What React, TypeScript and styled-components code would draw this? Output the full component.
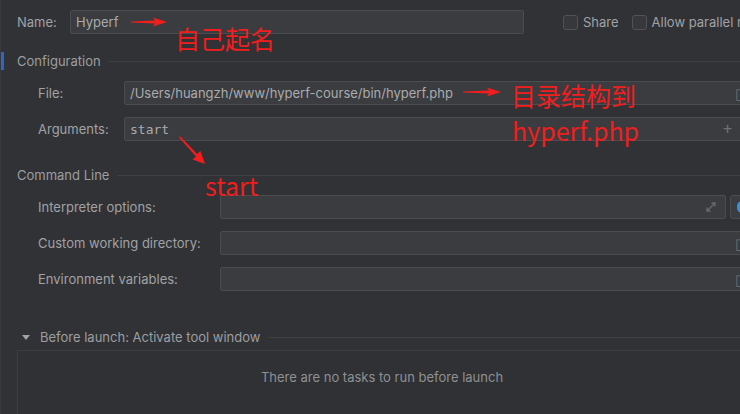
import React from "react";
import styled, { createGlobalStyle } from "styled-components";

const Global = createGlobalStyle`
  html, body { margin: 0; padding: 0; background: #313235; }
  body { width: 740px; height: 414px; overflow: hidden; font-family: Inter, "Liberation Sans", Arial, sans-serif; }
`;

const Root = styled.div`
  position: relative;
  width: 740px;
  height: 414px;
  overflow: hidden;
  background: #313235;
  border-left: 1px solid #38393c;
  box-sizing: border-box;
  color: #a3a5a8;
  font-size: 13px;
`;

const Accent = styled.div`
  position: absolute;
  left: 0;
  top: 52px;
  width: 3px;
  height: 18px;
  background: #2f64c8;
`;

const Content = styled.div`
  display: flex;
  flex-direction: column;
  padding-left: 16px;
  width: 760px;
  box-sizing: border-box;
`;

const TopRow = styled.div`
  display: flex;
  align-items: center;
  padding-top: 10px;
  height: 24px;
`;

const NameLabel = styled.span`
  width: 53px;
  color: #a0a2a5;
`;

const Input = styled.div<{ $w?: number; $mono?: boolean }>`
  box-sizing: border-box;
  height: 24px;
  ${(p) => (p.$w ? `width: ${p.$w}px; flex: none;` : "flex: 1;")}
  background: #3a3c3f;
  border: 1px solid #4a4c4f;
  border-radius: 2px;
  display: flex;
  align-items: center;
  padding: 0 5px;
  color: #a9abae;
  font-size: 13px;
  font-family: ${(p) => (p.$mono ? '"DejaVu Sans Mono", monospace' : 'Inter, "Liberation Sans", Arial, sans-serif')};
  position: relative;
  white-space: nowrap;
`;

const Check = styled.label<{ $ml: number }>`
  display: flex;
  align-items: center;
  gap: 5px;
  margin-left: ${(p) => p.$ml}px;
  color: #a0a2a5;
  white-space: nowrap;
  &::before {
    content: "";
    width: 13px;
    height: 13px;
    border: 1px solid #505255;
    border-radius: 3px;
    background: #36383b;
  }
`;

const SectionHeader = styled.div<{ $mt: number; $indent?: number }>`
  display: flex;
  align-items: center;
  gap: 8px;
  height: 16px;
  margin-top: ${(p) => p.$mt}px;
  padding-left: ${(p) => p.$indent ?? 0}px;
  color: #9c9ea1;
  white-space: nowrap;
  &::after {
    content: "";
    flex: 1;
    height: 1px;
    background: #3d3f42;
  }
`;

const Row = styled.div<{ $mt: number }>`
  display: flex;
  align-items: center;
  margin-top: ${(p) => p.$mt}px;
  padding-left: 21px;
`;

const Label = styled.span<{ $w: number }>`
  width: ${(p) => p.$w}px;
  flex: none;
  color: #a0a2a5;
  white-space: nowrap;
`;

const FieldIcon = styled.span<{ $r: number }>`
  position: absolute;
  right: ${(p) => p.$r}px;
  top: 50%;
  transform: translateY(-50%);
  color: #6f7174;
  font-size: 15px;
  line-height: 1;
  display: flex;
`;

const SideButton = styled.div`
  width: 24px;
  height: 24px;
  margin-left: 4px;
  box-sizing: border-box;
  border: 1px solid #4a4c4f;
  border-radius: 3px;
  background: #3a3c3f;
  display: flex;
  align-items: center;
  padding-left: 6px;
  flex: none;
`;

const BlueDot = styled.span`
  width: 10px;
  height: 12px;
  border-radius: 5px;
  background: #3a8fd6;
`;

const Triangle = styled.span`
  width: 0;
  height: 0;
  border-left: 4px solid transparent;
  border-right: 4px solid transparent;
  border-top: 5px solid #a0a2a5;
  margin-right: 2px;
`;

const TaskBox = styled.div`
  margin-top: 5px;
  height: 80px;
  border-left: 1px solid #3b3d40;
  border-top: 1px solid #3b3d40;
  background: #303134;
  display: flex;
  justify-content: center;
  padding-top: 18px;
  padding-right: 15px;
  box-sizing: border-box;
  color: #8e9093;
  font-size: 13px;
`;

const Note = styled.div<{ $x: number; $y: number }>`
  position: absolute;
  left: ${(p) => p.$x}px;
  top: ${(p) => p.$y}px;
  color: #f21d1d;
  font-family: "Noto Sans CJK SC", "Noto Sans", sans-serif;
  font-size: 25px;
  line-height: 30px;
  white-space: nowrap;
`;

const ArrowSvg = styled.svg<{ $x: number; $y: number }>`
  position: absolute;
  left: ${(p) => p.$x}px;
  top: ${(p) => p.$y}px;
  overflow: visible;
`;

const HArrow = ({ x, y, len }: { x: number; y: number; len: number }) => (
  <ArrowSvg $x={x} $y={y} width={len} height={10}>
    <polygon
      points={`0,4.5 ${len - 12},3.4 ${len - 14},0.5 ${len},5 ${len - 14},9.5 ${len - 12},6.6 0,5.5`}
      fill="#f21d1d"
    />
  </ArrowSvg>
);

const DiagArrow = () => (
  <ArrowSvg $x={176} $y={136} width={32} height={32}>
    <polygon points="2,1.5 3.5,0.5 20,18 23.5,15 28,28 15.5,23.5 19,20.5" fill="#f21d1d" />
  </ArrowSvg>
);

export default function App() {
  return (
    <>
      <Global />
      <Root>
        <Accent />
        <Content>
          <TopRow>
            <NameLabel>Name:</NameLabel>
            <Input $w={454}>Hyperf</Input>
            <Check $ml={39}>Share</Check>
            <Check $ml={13}>Allow parallel run</Check>
          </TopRow>

          <SectionHeader $mt={19}>Configuration</SectionHeader>
          <Row $mt={12}>
            <Label $w={86}>File:</Label>
            <Input>
              /Users/huangzh/www/hyperf-course/bin/hyperf.php
              <FieldIcon $r={17}>▯</FieldIcon>
            </Input>
          </Row>
          <Row $mt={12}>
            <Label $w={86}>Arguments:</Label>
            <Input $mono>
              start
              <FieldIcon $r={28}>+</FieldIcon>
            </Input>
          </Row>

          <SectionHeader $mt={26}>Command Line</SectionHeader>
          <Row $mt={12}>
            <Label $w={182}>Interpreter options:</Label>
            <Input $w={506}>
              <FieldIcon $r={8}>
                <svg width="12" height="12" viewBox="0 0 12 12">
                  <path d="M2 10 L10 2 M6.5 2 H10 V5.5 M2 6.5 V10 H5.5" stroke="#67696c" strokeWidth="1.3" fill="none" />
                </svg>
              </FieldIcon>
            </Input>
            <SideButton>
              <BlueDot />
            </SideButton>
          </Row>
          <Row $mt={12}>
            <Label $w={182}>Custom working directory:</Label>
            <Input>
              <FieldIcon $r={17}>▯</FieldIcon>
            </Input>
          </Row>
          <Row $mt={12}>
            <Label $w={182}>Environment variables:</Label>
            <Input>
              <FieldIcon $r={17}>▯</FieldIcon>
            </Input>
          </Row>

          <SectionHeader $mt={38} $indent={5}>
            <Triangle />
            Before launch: Activate tool window
          </SectionHeader>
          <TaskBox>There are no tasks to run before launch</TaskBox>
        </Content>

        <HArrow x={130} y={17} len={36} />
        <Note $x={174} $y={23}>自己起名</Note>
        <HArrow x={462} y={87} len={38} />
        <Note $x={510} $y={80}>目录结构到</Note>
        <Note $x={511} $y={115}>hyperf.php</Note>
        <DiagArrow />
        <Note $x={204} $y={170}>start</Note>
      </Root>
    </>
  );
}
